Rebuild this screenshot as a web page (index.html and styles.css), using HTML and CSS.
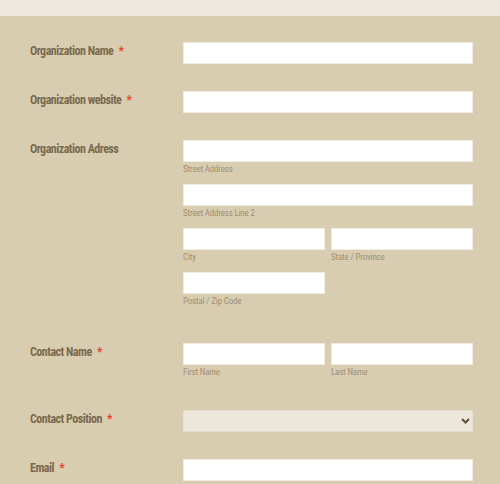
FILE: index.html
```html
<!DOCTYPE html>
<html>
<head>
<meta charset="utf-8">
<link rel="stylesheet" href="styles.css">
</head>
<body>
<div class="topbar"></div>
<form class="form">
  <div class="row">
    <label class="label">Organization Name <span class="req">*</span></label>
    <div class="field"><input class="input" type="text"></div>
  </div>
  <div class="row">
    <label class="label">Organization website <span class="req">*</span></label>
    <div class="field"><input class="input" type="text"></div>
  </div>
  <div class="row row-address">
    <label class="label">Organization Adress</label>
    <div class="field sub-grid">
      <div class="sub full"><input class="input" type="text"><span class="sublabel">Street Address</span></div>
      <div class="sub full"><input class="input" type="text"><span class="sublabel">Street Address Line 2</span></div>
      <div class="sub"><input class="input" type="text"><span class="sublabel">City</span></div>
      <div class="sub"><input class="input" type="text"><span class="sublabel">State / Province</span></div>
      <div class="sub"><input class="input" type="text"><span class="sublabel">Postal / Zip Code</span></div>
    </div>
  </div>
  <div class="row">
    <label class="label">Contact Name <span class="req">*</span></label>
    <div class="field sub-grid">
      <div class="sub"><input class="input" type="text"><span class="sublabel">First Name</span></div>
      <div class="sub"><input class="input" type="text"><span class="sublabel">Last Name</span></div>
    </div>
  </div>
  <div class="row">
    <label class="label">Contact Position <span class="req">*</span></label>
    <div class="field">
      <div class="select">
        <svg class="chev" width="9" height="6" viewBox="0 0 9 6"><path d="M1 1 L4.5 4.5 L8 1" fill="none" stroke="#5e4f36" stroke-width="2"/></svg>
      </div>
    </div>
  </div>
  <div class="row">
    <label class="label">Email <span class="req">*</span></label>
    <div class="field"><input class="input" type="text"></div>
  </div>
</form>
</body>
</html>
```
FILE: styles.css
```css
html, body {
  margin: 0;
  padding: 0;
  background: #d9cdb1;
  height: 484px;
  overflow: hidden;
}
body {
  font-family: "Roboto Condensed", "Liberation Sans Narrow", "Roboto", sans-serif;
  font-stretch: condensed;
}
.topbar {
  height: 16px;
  background: #ede8de;
}
.form {
  padding: 26px 28px 0 30px;
  display: flex;
  flex-direction: column;
  gap: 27px;
}
.row {
  display: grid;
  grid-template-columns: 153px 290px;
}
.row-address {
  padding-bottom: 4px;
}
.label {
  font-size: 12px;
  line-height: 16px;
  padding-top: 1px;
  font-weight: 700;
  letter-spacing: -0.5px;
  color: #7a6a4d;
}
.req {
  color: #e8412e;
  margin-left: 3px;
}
.field {
  display: flex;
  flex-direction: column;
}
.input {
  display: block;
  box-sizing: border-box;
  width: 100%;
  height: 22px;
  margin: 0;
  padding: 0 6px;
  background: #ffffff;
  border: 1px solid #f1ece2;
  border-radius: 0;
  outline: none;
}
.sub-grid {
  display: grid;
  grid-template-columns: 142px 142px;
  column-gap: 6px;
  row-gap: 4px;
}
.sub {
  display: flex;
  flex-direction: column;
}
.sub.full {
  grid-column: 1 / 3;
}
.sublabel {
  font-size: 9px;
  line-height: 14px;
  padding-bottom: 4px;
  letter-spacing: -0.2px;
  color: #a09173;
  font-family: "Roboto", sans-serif;
}
.select {
  box-sizing: border-box;
  height: 22px;
  background: #ede6da;
  border: 1px solid #e6dfd1;
  display: flex;
  align-items: center;
  justify-content: flex-end;
  padding-right: 2px;
}
.chev {
  display: block;
}
```
